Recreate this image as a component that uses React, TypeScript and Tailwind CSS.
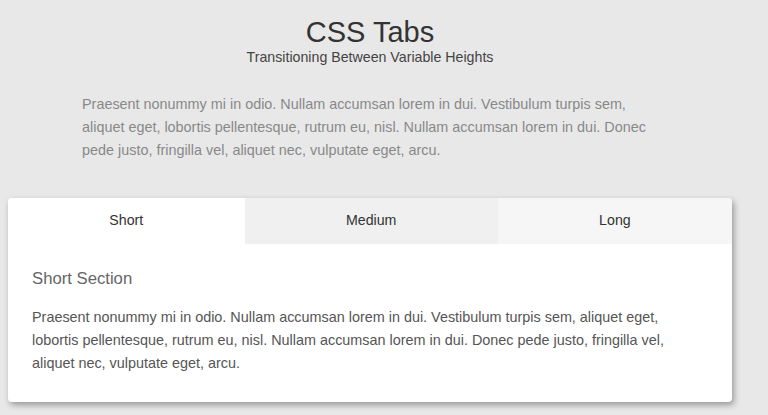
import React, { useState } from "react";

const intro =
  "Praesent nonummy mi in odio. Nullam accumsan lorem in dui. Vestibulum turpis sem, aliquet eget, lobortis pellentesque, rutrum eu, nisl. Nullam accumsan lorem in dui. Donec pede justo, fringilla vel, aliquet nec, vulputate eget, arcu.";

const tabs = ["Short", "Medium", "Long"];

export default function App() {
  const [active, setActive] = useState(0);
  return (
    <div
      className="w-[768px] h-[415px] overflow-hidden bg-[#e8e8e8] text-[#333]"
      style={{ fontFamily: '"Liberation Sans", Arial, sans-serif' }}
    >
      <div className="ml-2 w-[724px] flex flex-col">
        <h1 className="mt-[18px] text-center text-[29px] leading-[28px] text-[#333]">CSS Tabs</h1>
        <p className="mt-[5px] text-center text-[14.2px] leading-[13px] text-[#444]">
          Transitioning Between Variable Heights
        </p>
        <p className="mt-[29px] ml-[74px] w-[580px] text-[14.4px] leading-[23px] text-[#888]">
          {intro}
        </p>
        <div className="mt-[36px] bg-white rounded-[4px] overflow-hidden shadow-[2px_3px_6px_rgba(0,0,0,0.35)]">
          <div className="flex h-[46px]">
            {tabs.map((t, i) => (
              <button
                key={t}
                onClick={() => setActive(i)}
                className={
                  "flex-auto flex items-center justify-center text-[14.2px] text-[#333] " +
                  (i === active ? "bg-white" : i === 1 ? "bg-[#f0f0f0]" : "bg-[#f6f6f6]")
                }
              >
                {t}
              </button>
            ))}
          </div>
          <div className="pl-6 pr-[40px] pt-6 pb-[27px]">
            <h2 className="text-[16.7px] leading-[22px] text-[#666]">Short Section</h2>
            <p className="mt-[16px] text-[14.4px] leading-[23px] text-[#555]">{intro}</p>
          </div>
        </div>
      </div>
    </div>
  );
}
